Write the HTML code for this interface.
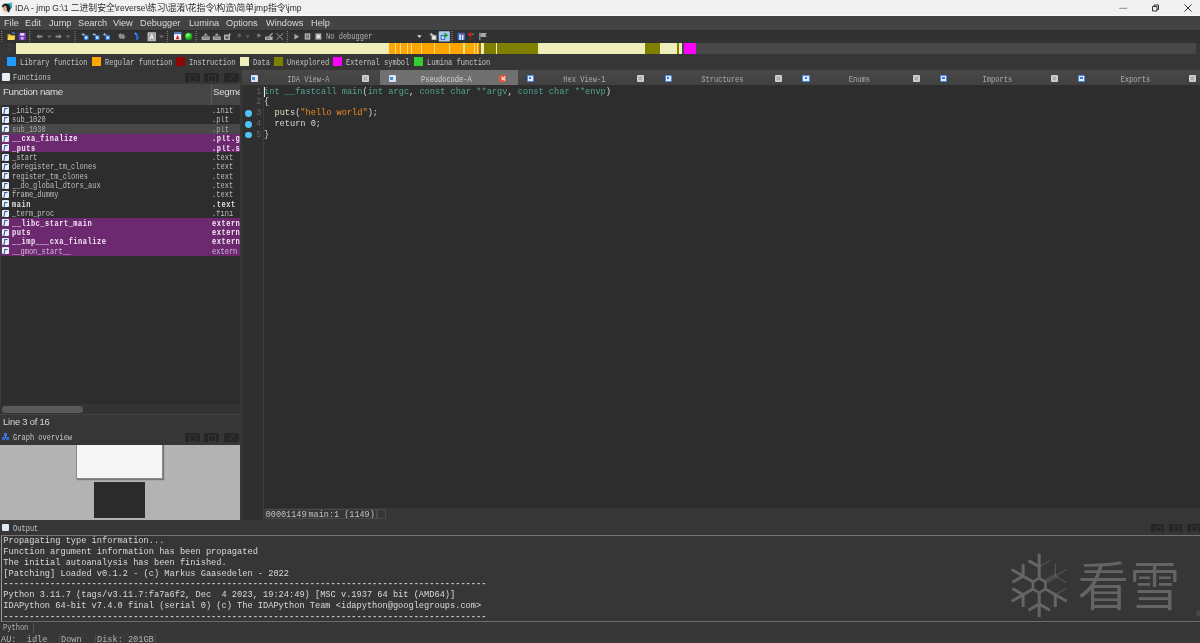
<!DOCTYPE html>
<html><head><meta charset="utf-8"><title>IDA - jmp</title>
<style>
*{box-sizing:border-box;margin:0;padding:0}
html,body{width:1200px;height:643px;overflow:hidden;background:#363636}
body{position:relative;font-family:"Liberation Sans","Noto Sans CJK SC",sans-serif;color:#d0d0d0}
.abs,.abs>*{position:absolute}
i{display:block;font-style:normal}
.ss{font-family:"Liberation Mono","DejaVu Sans Mono",monospace;font-size:9px;letter-spacing:0;white-space:pre;transform:scaleX(.7815);transform-origin:0 50%}
.mono{font-family:"Liberation Mono","DejaVu Sans Mono",monospace;white-space:pre}
/* title */
#title{left:0;top:0;width:1200px;height:15.6px;background:#f1f1f1;border-bottom:1px solid #f8f8f8;color:#2a2a2a;font-size:8.67px;line-height:17.2px}
#title .t{left:15px;top:0;white-space:nowrap;font-size:8.5px}
#title .t b{font-weight:normal;font-size:8.8px}
#title .logo{left:1px;top:1.6px;width:11.6px;height:11.6px}
#title .wc{top:0;width:30px;height:16px;color:#333}
/* menu */
#menu{left:0;top:15.6px;width:1200px;height:14.4px;background:#434343;font-size:9.2px;line-height:15.8px;color:#dadada}
#menu span{top:0;white-space:nowrap}
/* toolbar */
#tool{left:0;top:30px;width:1200px;height:13px;background:linear-gradient(#2a2a2a 0,#323232 2px,#323232 12px,#2e2e2e 13px)}
#tool i{top:2.5px;height:8px}
#tool .g{top:2px;width:1px;height:10px;background:repeating-linear-gradient(#8a8a8a 0 1px,transparent 1px 2px)}
#tool .dd{top:5.5px;width:0;height:0;border-left:2.5px solid transparent;border-right:2.5px solid transparent;border-top:3px solid #777}
/* nav */
#nav{left:0;top:43px;width:1200px;height:11px;background:#363636}
#nav i{top:0;height:11px}
/* legend */
#legend{left:0;top:54px;width:1200px;height:16px;background:#363636;color:#c4c4c4}
#legend i{top:3.2px;width:9px;height:9px}
#legend span{top:4.9px;height:9px;line-height:9.4px}
/* functions */
#fpanel{left:0;top:70px;width:241px;height:360px;background:#2d2d2d}
#ftitle{left:0;top:0;width:241px;height:14px;background:#363636}
#fhead{left:0;top:14px;width:241px;height:21px;background:#454545;font-size:9.7px;line-height:15.8px;color:#dedede;letter-spacing:-0.32px}
.fr{position:absolute;left:0;width:241px;height:9.5px;color:#bdbdbd}
.fr.sel{background:#484848;color:#a8a8a8}
.fr.ext{background:#6c2970;color:#f2e6f2;font-weight:bold}
.fr.ext span,.fr.b span{letter-spacing:0.64px}
.fr.ext.nb{font-weight:normal;color:#cdb6d0}.fr.ext.nb span{letter-spacing:0}
.fr.b{font-weight:bold;color:#e0e0e0}
.fr .fi{left:2px;top:1.2px;width:7px;height:7px;background:#e8eef6;border-radius:1px}
.fr .fi:after{content:"";position:absolute;left:2.2px;top:1.2px;width:2px;height:4.5px;border-left:1.3px solid #2a5aa0;border-top:1.3px solid #2a5aa0;transform:skewX(-12deg)}
.fr i,.fr span{position:absolute}
.fr span{top:1.6px;line-height:9.6px;font-family:"Liberation Mono","DejaVu Sans Mono",monospace;font-size:9px;letter-spacing:0;white-space:pre;transform:scaleX(.7815);transform-origin:0 50%}
.fr .fn{left:12px}
.fr .fs{left:212px;width:36.3px;overflow:hidden}
.pbtn{top:2.9px;width:14.6px;height:9px;background:#262626;border-radius:1px}
.pbtn:after{content:"";position:absolute;left:4px;top:2px;width:6px;height:5px;border:1px solid #353535;border-top-width:1.5px}
.pbtn.o:after{left:4px;top:1.5px;width:5px;height:4.5px}
.pbtn.x:after{border:none;left:3.5px;top:4px;width:8px;height:1px;background:#383838;transform:rotate(-45deg)}
/* tabs */
#tabs{left:242px;top:70.3px;width:958px;height:14.7px;background:linear-gradient(#484848,#414141)}
.tab{position:absolute;top:70.3px;height:14.7px;background:linear-gradient(#484848,#414141)}
.tab.act{background:#707070}
.tab .tt{position:absolute;left:0;right:5px;top:0;text-align:center;line-height:20.4px;color:#acacac;font-family:"Liberation Mono","DejaVu Sans Mono",monospace;font-size:9px;letter-spacing:0;white-space:pre;transform:scaleX(.7815);transform-origin:50% 50%}
.tab.act .tt{color:#d4d4d4}
.tab .ti{position:absolute;left:9px;top:4.6px;width:7.2px;height:6.8px;background:#d6e6f8;border-radius:1px}
.tab .ti.b2{background:#e2ecfc;border:1.2px solid #4a88e6;border-radius:1px}
.tab .ti.b2:after{left:1.2px;top:1.2px;width:2.4px;height:2.4px;background:#3a78dc}
.tab .ti:after{content:"";position:absolute;left:1.2px;top:1.8px;width:3px;height:3.6px;background:#4a8cdc}
.tab .tx{position:absolute;left:119.6px;top:4.6px;width:7px;height:7px;background:#cfcfcf;border-radius:1px}
.tab.act .tx{background:#e0573c}
.tab .tx:before,.tab .tx:after{content:"";position:absolute;left:1.2px;top:3px;width:4.6px;height:1px;background:#a0a0a0;transform:rotate(45deg)}
.tab .tx:after{transform:rotate(-45deg)}
.tab.act .tx:before,.tab.act .tx:after{background:#fff}
/* code */
#gutter{left:239.8px;top:85px;width:24.2px;height:434.7px;background:#2f2f2f;border-left:2.2px solid #363636;border-right:0.8px solid #3b3b3b}
#code{left:263.5px;top:85px;width:936.5px;height:422.9px;background:#2d2d2d}
.cl{position:absolute;left:0.6px;height:10.8px;line-height:10.8px;font-family:"Liberation Mono","DejaVu Sans Mono",monospace;font-size:8.63px;white-space:pre;color:#d8d8d8}
.ln{position:absolute;left:11.5px;width:8px;text-align:right;height:10.8px;line-height:10.8px;font-family:"Liberation Mono",monospace;font-size:8.4px;color:#636363}
.dot{position:absolute;left:3.4px;width:6.8px;height:6.8px;border-radius:50%;background:#4fc3f7}
.k{color:#4fa391}.s{color:#ee8a1e}.f{color:#e4dcbc}
.sf span{top:1px;height:10.6px;line-height:10.8px;font-family:"Liberation Mono",monospace;font-size:8.5px;color:#c2c2c2;border:1px solid #4a4a4a;padding-left:0;white-space:pre;overflow:hidden}
/* graph */
#gtitle{left:0;top:430px;width:241px;height:14px;background:#363636}
#graph{left:0;top:445px;width:240.3px;height:74.7px;overflow:hidden;background:#b3b3b3}
/* output */
#otitle{left:0;top:520px;width:1200px;height:15px;background:#363636}
#out{left:1px;top:535.2px;width:1199px;height:86.8px;background:#363636;border:1px solid #6c6c6c;border-right:none;border-top:1.5px solid #747474;border-left:1.2px solid #999}
.ol{position:absolute;left:1.3px;height:10.8px;line-height:10.8px;font-family:"Liberation Mono","DejaVu Sans Mono",monospace;font-size:8.665px;white-space:pre;color:#dadada}
.ol.d{font-weight:bold;color:#c8c8c8}
#py{left:0;top:622.5px;width:1200px;height:10.5px;background:#363636}
#status{left:0;top:633px;width:1200px;height:10px;background:#383838;color:#b4b4b4}
#root{position:absolute;left:0;top:0;width:1200px;height:643px;will-change:transform}
</style></head><body><div id="root">

<div id="title" class="abs"><svg class="logo" viewBox="0 0 12 12"><defs><linearGradient id="tl" x1="0" y1="1" x2="1" y2="0"><stop offset="0" stop-color="#0e4a58"/><stop offset="1" stop-color="#56d0d8"/></linearGradient></defs><path d="M5.5 2L11.6.2 11.4 6 9 8.5z" fill="url(#tl)"/><path d="M.8 5C1.2 2.6 3.4 1.2 6 1.8 8.6 2.4 10 5 9.4 8L8.2 11.2 6 9z" fill="#1c1f1e"/><ellipse cx="3.9" cy="6.8" rx="2.1" ry="3.5" transform="rotate(-12 3.9 6.8)" fill="#d6b094"/><path d="M3 9.5L6.4 9l1 3H4z" fill="#e6dcc0"/><path d="M1.2 4.2C2 2.8 3.4 2.6 4.6 3.4L2.4 5.6z" fill="#3a2c24"/></svg><span class="t">IDA - jmp G:\1 <b>二进制安全</b>\reverse\<b>练习</b>\<b>混淆</b>\<b>花指令</b>\<b>构造</b>\<b>简单</b>jmp<b>指令</b>\jmp</span>
<svg class="wc" style="left:1108px" viewBox="0 0 30 16"><path d="M11.2 8.3h8" stroke="#8a8a8a" stroke-width="1" fill="none"/></svg>
<svg class="wc" style="left:1140px" viewBox="0 0 30 16"><path d="M12.5 6.5h4.5v4.5h-4.5zM14 6.5v-1.5h4.5v4.5h-1.5" stroke="#333" stroke-width="1" fill="none"/></svg>
<svg class="wc" style="left:1173px" viewBox="0 0 30 16"><path d="M11.5 4.5l7 7M18.5 4.5l-7 7" stroke="#333" stroke-width="1" fill="none"/></svg>
</div>

<div id="menu" class="abs">
<span style="left:4px">File</span><span style="left:25px">Edit</span><span style="left:49px">Jump</span><span style="left:78px">Search</span><span style="left:113px">View</span><span style="left:140px">Debugger</span><span style="left:189px">Lumina</span><span style="left:226px">Options</span><span style="left:266px">Windows</span><span style="left:311px">Help</span>
</div>

<div id="tool" class="abs"><svg width="1200" height="13" viewBox="0 0 1200 13" style="left:0;top:0"><rect x="1.2" y="1" width="1" height="1" fill="#8c8c8c"/><rect x="1.2" y="3" width="1" height="1" fill="#8c8c8c"/><rect x="1.2" y="5" width="1" height="1" fill="#8c8c8c"/><rect x="1.2" y="7" width="1" height="1" fill="#8c8c8c"/><rect x="1.2" y="9" width="1" height="1" fill="#8c8c8c"/><rect x="1.2" y="11" width="1" height="1" fill="#8c8c8c"/><path d="M7.6 4.2h2.6l.8 1h3.8v4.7H7.6z" fill="#e8b820"/><path d="M7.6 9.9l1.4-3.6h6.4l-1.6 3.6z" fill="#f6d95a"/><rect x="12.2" y="2.3" width="2.4" height="1.8" fill="#3a78d8"/><rect x="18.8" y="2.8" width="6.9" height="7.1" rx=".6" fill="#7a35c8"/><rect x="20.2" y="3.2" width="4.2" height="2.4" fill="#efe4fa"/><rect x="20.8" y="7.2" width="2.8" height="2.3" fill="#d8c4f0"/><rect x="29.3" y="1" width="1" height="1" fill="#8c8c8c"/><rect x="29.3" y="3" width="1" height="1" fill="#8c8c8c"/><rect x="29.3" y="5" width="1" height="1" fill="#8c8c8c"/><rect x="29.3" y="7" width="1" height="1" fill="#8c8c8c"/><rect x="29.3" y="9" width="1" height="1" fill="#8c8c8c"/><rect x="29.3" y="11" width="1" height="1" fill="#8c8c8c"/><path d="M36.2 6.5l3-2.3v1.4h3.4v1.8h-3.4v1.4z" fill="#8a8a8a"/><path d="M46.9 5.4h5l-2.5 2.8z" fill="#6a6a6a"/><path d="M62 6.5l-3-2.3v1.4h-3.4v1.8h3.4v1.4z" fill="#8a8a8a"/><path d="M65.6 5.4h5l-2.5 2.8z" fill="#6a6a6a"/><rect x="74.6" y="1" width="1" height="1" fill="#8c8c8c"/><rect x="74.6" y="3" width="1" height="1" fill="#8c8c8c"/><rect x="74.6" y="5" width="1" height="1" fill="#8c8c8c"/><rect x="74.6" y="7" width="1" height="1" fill="#8c8c8c"/><rect x="74.6" y="9" width="1" height="1" fill="#8c8c8c"/><rect x="74.6" y="11" width="1" height="1" fill="#8c8c8c"/><path d="M81.3 4.8l2.2-2v1.4h1.6v1.3h-1.6z" fill="#9cc4f4"/><rect x="83.89999999999999" y="5.2" width="4.6" height="4.7" fill="#2f7fe0"/><rect x="85.0" y="6.4" width="2.4" height="2.4" fill="#dbe9fb"/><path d="M92.3 4.8l2.2-2v1.4h1.6v1.3h-1.6z" fill="#9cc4f4"/><rect x="94.89999999999999" y="5.2" width="4.6" height="4.7" fill="#2f7fe0"/><rect x="96.0" y="6.4" width="2.4" height="2.4" fill="#dbe9fb"/><path d="M102.8 4.8l2.2-2v1.4h1.6v1.3h-1.6z" fill="#9cc4f4"/><rect x="105.39999999999999" y="5.2" width="4.6" height="4.7" fill="#2f7fe0"/><rect x="106.5" y="6.4" width="2.4" height="2.4" fill="#dbe9fb"/><path d="M118.4 4.6l2.4-1.4 1.2 1.2 1.6-.6 1.6 3.4-1.4 2-1.8-1-1 .8-2-1.2z" fill="#8c8c8c"/><path d="M134 3l2.2-.4 2 2.6.4 3-1 1.8-1.6-.2.2-3.6z" fill="#1f6fe0"/><path d="M134.6 3.2l1.2-.2 1 1.6z" fill="#b0d4ff"/><rect x="148" y="2.8" width="7.4" height="8" fill="#a2a2a2" stroke="#dcdcdc" stroke-width=".7"/><path d="M150 9.4l1.7-5.2 1.7 5.2M150.7 7.6h2" stroke="#fff" stroke-width=".9" fill="none"/><path d="M159 5.4h5l-2.5 2.8z" fill="#707070"/><rect x="166.8" y="1" width="1" height="1" fill="#8c8c8c"/><rect x="166.8" y="3" width="1" height="1" fill="#8c8c8c"/><rect x="166.8" y="5" width="1" height="1" fill="#8c8c8c"/><rect x="166.8" y="7" width="1" height="1" fill="#8c8c8c"/><rect x="166.8" y="9" width="1" height="1" fill="#8c8c8c"/><rect x="166.8" y="11" width="1" height="1" fill="#8c8c8c"/><rect x="174" y="2.5" width="7.2" height="7.4" fill="#f0f4fa"/><rect x="174" y="2.5" width="7.2" height="1.6" fill="#3f74c8"/><path d="M175.6 9.3l2-4.4 2 4.4z" fill="#e0241c"/><defs><radialGradient id="gb" cx=".38" cy=".32" r=".7"><stop offset="0" stop-color="#b4ffaa"/><stop offset=".45" stop-color="#2fd02a"/><stop offset="1" stop-color="#128a10"/></radialGradient></defs><circle cx="188.7" cy="6.4" r="3.7" fill="url(#gb)"/><rect x="195.6" y="1" width="1" height="1" fill="#8c8c8c"/><rect x="195.6" y="3" width="1" height="1" fill="#8c8c8c"/><rect x="195.6" y="5" width="1" height="1" fill="#8c8c8c"/><rect x="195.6" y="7" width="1" height="1" fill="#8c8c8c"/><rect x="195.6" y="9" width="1" height="1" fill="#8c8c8c"/><rect x="195.6" y="11" width="1" height="1" fill="#8c8c8c"/><rect x="201.7" y="6.4" width="8" height="3.5" fill="#b4b4b4"/><rect x="202.7" y="7.4" width="6" height="1.2" fill="#777"/><path d="M205.7 3.2l2.2 2.4h-4.4z" fill="#b4b4b4"/><rect x="212.8" y="6.4" width="8" height="3.5" fill="#b4b4b4"/><rect x="213.8" y="7.4" width="6" height="1.2" fill="#777"/><path d="M216.8 3.2l2.2 2.4h-4.4z" fill="#b4b4b4"/><rect x="224" y="4.6" width="6" height="5.3" fill="#b4b4b4"/><rect x="225.4" y="6" width="3.2" height="2.8" fill="#666"/><path d="M229 2.8l2 2-2 1z" fill="#b4b4b4"/><path d="M235 9.6l3.2-3.4-1-1 2-2 2.4 2.4-2 2-1-1z" fill="#5e5e5e"/><path d="M245.2 5.4h5l-2.5 2.8z" fill="#5e5e5e"/><path d="M254.4 9.6l3.2-3.4-1-1 2-2 2.4 2.4-2 2-1-1z" fill="#7a7a7a"/><rect x="265" y="6.6" width="7.6" height="3.3" fill="#b4b4b4"/><rect x="266" y="7.6" width="4" height="1" fill="#666"/><path d="M268.4 6.6l3.8-3.8 .8 .8-3 3z" fill="#b4b4b4"/><path d="M276.4 3.2l6.8 6.6M283.2 3.2l-6.8 6.6" stroke="#9c9c9c" stroke-width="1"/><rect x="286.8" y="1" width="1" height="1" fill="#8c8c8c"/><rect x="286.8" y="3" width="1" height="1" fill="#8c8c8c"/><rect x="286.8" y="5" width="1" height="1" fill="#8c8c8c"/><rect x="286.8" y="7" width="1" height="1" fill="#8c8c8c"/><rect x="286.8" y="9" width="1" height="1" fill="#8c8c8c"/><rect x="286.8" y="11" width="1" height="1" fill="#8c8c8c"/><path d="M294.4 3.8l4.8 2.9-4.8 2.9z" fill="#a4a4a4"/><rect x="304.7" y="3.4" width="5.6" height="6.2" fill="#b0b0b0"/><rect x="306.3" y="4.8" width=".9" height="3.4" fill="#555"/><rect x="307.9" y="4.8" width=".9" height="3.4" fill="#555"/><rect x="315.4" y="3.4" width="5.9" height="6.2" fill="#b0b0b0"/><rect x="317" y="5" width="2.8" height="3" fill="#e6e6e6"/><path d="M417.2 5.2h4.4l-2.2 2.8z" fill="#dcdcdc"/><path d="M429.4 5l2.6-2.4v1.4h1.4v2h-1.4z" fill="#b8b8b8"/><rect x="431.6" y="5.2" width="4.8" height="4.7" fill="#c8c8c8"/><rect x="432.6" y="6.4" width="2.8" height="2.4" fill="#eee"/><rect x="438.7" y="1.2" width="11.2" height="10.4" rx=".8" fill="#a9c9ef"/><rect x="440.6" y="5" width="4.6" height="5" fill="#3a76c8"/><rect x="441.6" y="6.4" width="2.4" height="2.4" fill="#d8e6f8"/><path d="M444.4 2.6l4 2.6-4 2.6z" fill="#1f9a2c"/><rect x="451.6" y="1" width="1" height="1" fill="#8c8c8c"/><rect x="451.6" y="3" width="1" height="1" fill="#8c8c8c"/><rect x="451.6" y="5" width="1" height="1" fill="#8c8c8c"/><rect x="451.6" y="7" width="1" height="1" fill="#8c8c8c"/><rect x="451.6" y="9" width="1" height="1" fill="#8c8c8c"/><rect x="451.6" y="11" width="1" height="1" fill="#8c8c8c"/><rect x="457.7" y="2.8" width="7.2" height="7.1" fill="#2f6fd6"/><rect x="459.2" y="4.6" width="1.6" height="5.3" fill="#e8eefa"/><rect x="461.8" y="4.6" width="1.6" height="5.3" fill="#e8eefa"/><path d="M461.4 3.2l2.8 0-1.4 2z" fill="#e02828"/><circle cx="470" cy="4.4" r="1.9" fill="#d62222"/><rect x="469.6" y="5.6" width=".9" height="4.4" fill="#b02020"/><path d="M472.2 3l2.2 1.3-2.2 1.3z" fill="#2aa838"/><rect x="479.2" y="2.8" width="1.2" height="7.4" fill="#9a9a9a"/><path d="M480.4 3h6.4l-1.4 2 1.4 2h-6.4z" fill="#a8a8a8"/></svg><span class="ss" style="left:325.5px;top:2.2px;line-height:10px;color:#b4b4b4">No debugger</span></div>

<div id="nav" class="abs">
<i style="left:16px;width:1180px;background:#484848"></i>
<i style="left:16px;width:667px;background:#eeeebb"></i>
<i style="left:388.6px;width:90.6px;background:#ffa500"></i>
<i style="left:395.4px;width:1px;background:#f6dc8c"></i><i style="left:400.4px;width:1px;background:#f6dc8c"></i><i style="left:407px;width:1px;background:#f6dc8c"></i><i style="left:410.6px;width:1px;background:#f6dc8c"></i><i style="left:421.2px;width:1.3px;background:#f6dc8c"></i><i style="left:433.6px;width:1.3px;background:#f6dc8c"></i><i style="left:448.6px;width:1.3px;background:#f6dc8c"></i><i style="left:463.4px;width:1.5px;background:#f6dc8c"></i><i style="left:473.6px;width:1px;background:#f6dc8c"></i><i style="left:477px;width:1px;background:#f6dc8c"></i>
<i style="left:466px;width:2px;height:3px;top:2px;background:#9ad820"></i>
<i style="left:479.2px;width:1.4px;background:#b07800"></i>
<i style="left:483.8px;width:54px;background:#808000"></i>
<i style="left:495.8px;width:1px;background:#eeeebb"></i>
<i style="left:644.5px;width:15px;background:#808000"></i>
<i style="left:677.2px;width:1.6px;background:#808000"></i>
<i style="left:682.4px;width:1.6px;background:#484848"></i>
<i style="left:684px;width:11.5px;background:#ff00ff"></i>
<span style="left:8px;top:0;font-size:5px;line-height:5px;color:#555">&lt;</span><span style="left:8px;top:5px;font-size:5px;line-height:5px;color:#555">&gt;</span>
</div>

<div id="legend" class="abs"><i style="left:7px;background:#1e9bff"></i><span class="ss" style="left:20px">Library function</span><i style="left:91.5px;background:#ffa500"></i><span class="ss" style="left:104.5px">Regular function</span><i style="left:176px;background:#900606"></i><span class="ss" style="left:189px">Instruction</span><i style="left:239.9px;background:#eeeebb"></i><span class="ss" style="left:252.9px">Data</span><i style="left:273.7px;background:#808000"></i><span class="ss" style="left:286.7px">Unexplored</span><i style="left:332.9px;background:#ff00ff"></i><span class="ss" style="left:345.9px">External symbol</span><i style="left:414px;background:#32cd32"></i><span class="ss" style="left:427px">Lumina function</span></div>

<div id="fpanel" class="abs">
<div id="ftitle" class="abs"><i style="left:2px;top:3px;width:7.5px;height:7.5px;background:#e8eef6;border-radius:1px"></i><span class="ss" style="left:13px;top:2.6px;line-height:10px;color:#c4c4c4">Functions</span>
<i class="pbtn" style="left:185.2px"></i><i class="pbtn" style="left:204.4px"></i><i class="pbtn x" style="left:224px"></i></div>
<div id="fhead" class="abs"><span style="left:3px;top:0">Function name</span><i style="left:211px;top:0;width:1px;height:21px;background:#5a5a5a"></i><span style="left:213px;top:0;width:28px;overflow:hidden;white-space:nowrap">Segment</span></div>
</div>
<div class="abs" style="left:0;top:0;width:241px;height:0">
<div class="fr " style="top:105.40px"><i class="fi"></i><span class="fn">_init_proc</span><span class="fs">.init</span></div>
<div class="fr " style="top:114.79px"><i class="fi"></i><span class="fn">sub_1020</span><span class="fs">.plt</span></div>
<div class="fr sel" style="top:124.17px"><i class="fi"></i><span class="fn">sub_1030</span><span class="fs">.plt</span></div>
<div class="fr ext" style="top:133.56px"><i class="fi"></i><span class="fn">__cxa_finalize</span><span class="fs">.plt.got</span></div>
<div class="fr ext" style="top:142.94px"><i class="fi"></i><span class="fn">_puts</span><span class="fs">.plt.sec</span></div>
<div class="fr " style="top:152.32px"><i class="fi"></i><span class="fn">_start</span><span class="fs">.text</span></div>
<div class="fr " style="top:161.71px"><i class="fi"></i><span class="fn">deregister_tm_clones</span><span class="fs">.text</span></div>
<div class="fr " style="top:171.09px"><i class="fi"></i><span class="fn">register_tm_clones</span><span class="fs">.text</span></div>
<div class="fr " style="top:180.48px"><i class="fi"></i><span class="fn">__do_global_dtors_aux</span><span class="fs">.text</span></div>
<div class="fr " style="top:189.87px"><i class="fi"></i><span class="fn">frame_dummy</span><span class="fs">.text</span></div>
<div class="fr b" style="top:199.25px"><i class="fi"></i><span class="fn">main</span><span class="fs">.text</span></div>
<div class="fr " style="top:208.63px"><i class="fi"></i><span class="fn">_term_proc</span><span class="fs">.fini</span></div>
<div class="fr ext" style="top:218.02px"><i class="fi"></i><span class="fn">__libc_start_main</span><span class="fs">extern</span></div>
<div class="fr ext" style="top:227.41px"><i class="fi"></i><span class="fn">puts</span><span class="fs">extern</span></div>
<div class="fr ext" style="top:236.79px"><i class="fi"></i><span class="fn">__imp___cxa_finalize</span><span class="fs">extern</span></div>
<div class="fr ext nb" style="top:246.18px"><i class="fi"></i><span class="fn">__gmon_start__</span><span class="fs">extern</span></div>

</div>
<i class="abs" style="left:0;top:105px;width:1.2px;height:299px;background:#3e3e3e"></i>
<div class="abs" style="left:0;top:404px;width:241px;height:11px;background:#333;border-bottom:1px solid #424242"><i style="left:2px;top:2.2px;width:81px;height:6.5px;border-radius:3.5px;background:#5a5a5a"></i></div>
<div class="abs" style="left:0;top:415px;width:241px;height:15px;background:#363636;font-size:9.4px;line-height:14px;color:#d8d8d8;letter-spacing:-0.2px"><span style="left:3px;top:0;white-space:nowrap">Line 3 of 16</span></div>

<div id="gtitle" class="abs"><i style="left:4.2px;top:3px;width:3px;height:3px;background:#3b7be0"></i><i style="left:2.2px;top:7px;width:3px;height:3.4px;background:#2f6ad0"></i><i style="left:6.2px;top:7px;width:3px;height:3.4px;background:#2f6ad0"></i><i style="left:5.4px;top:5.6px;width:.8px;height:2px;background:#6a9ae8"></i><span class="ss" style="left:13px;top:2.6px;line-height:10px;color:#c4c4c4">Graph overview</span>
<i class="pbtn" style="left:185.2px;top:2.5px"></i><i class="pbtn" style="left:204.4px;top:2.5px"></i><i class="pbtn x" style="left:224px;top:2.5px"></i></div>
<div id="graph" class="abs"><i style="left:76px;top:-1.4px;width:87px;height:35px;background:#f6f6f6;border:1px solid #8a8a8a;box-shadow:1px 1px 1px #777"></i><i style="left:94.3px;top:37px;width:50.5px;height:36.2px;background:#2b2b2b"></i></div>

<div id="tabs" class="abs"></div>
<div class="tab" style="left:242.0px;width:137.8px"><i class="ti ida"></i><span class="tt">IDA View-A</span><i class="tx"></i></div>
<div class="tab act" style="left:379.9px;width:137.8px"><i class="ti ida"></i><span class="tt">Pseudocode-A</span><i class="tx"></i></div>
<div class="tab" style="left:517.7px;width:137.8px"><i class="ti b2"></i><span class="tt">Hex View-1</span><i class="tx"></i></div>
<div class="tab" style="left:655.5px;width:137.8px"><i class="ti b2"></i><span class="tt">Structures</span><i class="tx"></i></div>
<div class="tab" style="left:793.4px;width:137.8px"><i class="ti b2"></i><span class="tt">Enums</span><i class="tx"></i></div>
<div class="tab" style="left:931.2px;width:137.8px"><i class="ti b2"></i><span class="tt">Imports</span><i class="tx"></i></div>
<div class="tab" style="left:1069.1px;width:137.8px"><i class="ti b2"></i><span class="tt">Exports</span><i class="tx"></i></div>

<div id="gutter" class="abs">
<span class="ln" style="top:1.6px">1</span><span class="ln" style="top:12.4px">2</span><span class="ln" style="top:23.2px">3</span><span class="ln" style="top:34px">4</span><span class="ln" style="top:44.8px">5</span>
<i class="dot" style="top:25.1px"></i><i class="dot" style="top:35.9px"></i><i class="dot" style="top:46.7px"></i>
</div>
<div id="code" class="abs">
<i style="left:0.2px;top:1.9px;width:1px;height:10px;background:#e8e8e8"></i>
<div class="cl" style="top:1.6px"><span class="k">int __fastcall</span> <span class="k">main</span>(<span class="k">int argc</span>, <span class="k">const char **argv</span>, <span class="k">const char **envp</span>)</div>
<div class="cl" style="top:12.4px">{</div>
<div class="cl" style="top:23.2px">  <span class="f">puts</span>(<span class="s">"hello world"</span>);</div>
<div class="cl" style="top:34px">  return 0;</div>
<div class="cl" style="top:44.8px">}</div>
</div>
<div class="abs sf" style="left:264px;top:507.9px;width:936px;height:12.1px;background:#363636">
<span style="left:0.7px;width:42.8px">00001149</span><span style="left:43.5px;width:69.5px">main:1 (1149)</span><span style="left:113px;width:8.5px"></span></div>

<div id="otitle" class="abs"><i style="left:2px;top:4px;width:7px;height:7px;background:#dfe9f6;border-radius:1px"></i><span class="ss" style="left:13px;top:3.6px;line-height:10px;color:#c4c4c4">Output</span>
<i class="pbtn o" style="left:1151px;top:4px;width:13px;height:8px"></i><i class="pbtn o" style="left:1169px;top:4px;width:13px;height:8px"></i><i class="pbtn o" style="left:1187px;top:4px;width:13px;height:8px"></i></div>
<div id="out" class="abs">
<div class="ol" style="top:0.0px">Propagating type information...</div>
<div class="ol" style="top:10.8px">Function argument information has been propagated</div>
<div class="ol" style="top:21.6px">The initial autoanalysis has been finished.</div>
<div class="ol" style="top:32.4px">[Patching] Loaded v0.1.2 - (c) Markus Gaasedelen - 2022</div>
<div class="ol d" style="top:43.2px">---------------------------------------------------------------------------------------------</div>
<div class="ol" style="top:54.0px">Python 3.11.7 (tags/v3.11.7:fa7a6f2, Dec  4 2023, 19:24:49) [MSC v.1937 64 bit (AMD64)]</div>
<div class="ol" style="top:64.8px">IDAPython 64-bit v7.4.0 final (serial 0) (c) The IDAPython Team &lt;idapython@googlegroups.com&gt;</div>
<div class="ol d" style="top:75.6px">---------------------------------------------------------------------------------------------</div>
</div>
<div id="py" class="abs"><span class="ss" style="left:3px;top:0;height:10.5px;line-height:10px;color:#b4b4b4">Python</span><i style="left:32.5px;top:0;width:1px;height:10.5px;background:#555"></i></div>
<div id="status" class="abs"><i style="left:58.5px;top:1px;width:1px;height:9px;background:#484848"></i><i style="left:95px;top:1px;width:1px;height:9px;background:#484848"></i><i style="left:155px;top:1px;width:1px;height:9px;background:#484848"></i><span class="mono" style="left:1px;top:0;line-height:14.4px;font-size:8.6px">AU:  idle</span><span class="mono" style="left:61px;top:0;line-height:14.4px;font-size:8.6px">Down</span><span class="mono" style="left:97px;top:0;line-height:14.4px;font-size:8.6px">Disk: 201GB</span></div>

<svg class="abs" style="left:1000px;top:545px;width:200px;height:80px" viewBox="0 0 200 80">
<g stroke="#656565" fill="none">
<path stroke-width="3" d="M39.2 33.2L39.2 8.6M39.2 21.8L28.5 15.6M33.0 36.8L11.7 24.5M23.1 31.1L12.4 37.3M23.1 31.1L23.1 18.7M33.0 44.0L11.7 56.3M23.1 49.7L23.1 62.1M23.1 49.7L12.4 43.5M39.2 47.6L39.2 72.2M39.2 59.0L49.9 65.2M39.2 59.0L28.5 65.2M45.4 44.0L66.7 56.3M55.3 49.7L55.3 62.1"/>
<path stroke-width="0.8" d="M39.2 21.8L49.9 15.6M55.3 49.7L66.0 43.5M45.4 36.8L66.7 24.5M55.3 31.1L55.3 18.7M55.3 31.1L66.0 37.3M47.1 37.7L57.8 31.5M45.5 34.9L56.2 28.7"/>
<path stroke-width="2.6" d="M39.2 33.2L33.0 36.8L33.0 44.0L39.2 47.6L45.4 44.0L45.4 36.8Z" fill="#333"/>
</g>
<text transform="translate(0,40.7) scale(1,1.037) translate(0,-40.7)" x="77.6" y="60.2" font-family="'Noto Sans CJK SC',sans-serif" font-weight="350" font-size="51.5" letter-spacing="-0.2" fill="#646464">看雪</text>
<circle cx="199.3" cy="68.3" r="3.2" fill="#474747"/>
</svg>
</div></body></html>
